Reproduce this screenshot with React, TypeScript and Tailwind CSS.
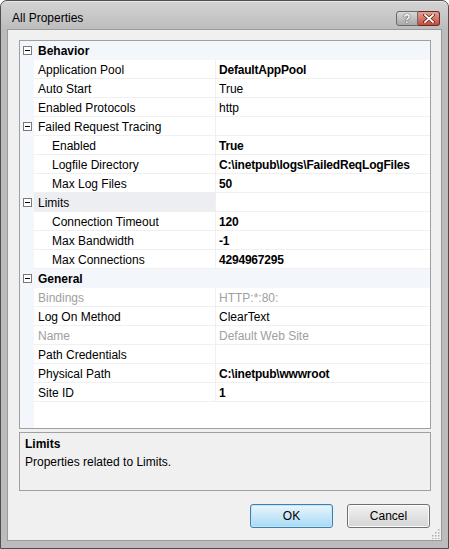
import React from 'react';

type Row =
  | { kind: 'cat'; label: string }
  | { kind: 'group'; label: string; selected?: boolean }
  | { kind: 'prop'; label: string; value: string; level: 1 | 2; bold?: boolean; disabled?: boolean };

const rows: Row[] = [
  { kind: 'cat', label: 'Behavior' },
  { kind: 'prop', label: 'Application Pool', value: 'DefaultAppPool', level: 1, bold: true },
  { kind: 'prop', label: 'Auto Start', value: 'True', level: 1 },
  { kind: 'prop', label: 'Enabled Protocols', value: 'http', level: 1 },
  { kind: 'group', label: 'Failed Request Tracing' },
  { kind: 'prop', label: 'Enabled', value: 'True', level: 2, bold: true },
  { kind: 'prop', label: 'Logfile Directory', value: 'C:\\inetpub\\logs\\FailedReqLogFiles', level: 2, bold: true },
  { kind: 'prop', label: 'Max Log Files', value: '50', level: 2, bold: true },
  { kind: 'group', label: 'Limits', selected: true },
  { kind: 'prop', label: 'Connection Timeout', value: '120', level: 2, bold: true },
  { kind: 'prop', label: 'Max Bandwidth', value: '-1', level: 2, bold: true },
  { kind: 'prop', label: 'Max Connections', value: '4294967295', level: 2, bold: true },
  { kind: 'cat', label: 'General' },
  { kind: 'prop', label: 'Bindings', value: 'HTTP:*:80:', level: 1, disabled: true },
  { kind: 'prop', label: 'Log On Method', value: 'ClearText', level: 1 },
  { kind: 'prop', label: 'Name', value: 'Default Web Site', level: 1, disabled: true },
  { kind: 'prop', label: 'Path Credentials', value: '', level: 1 },
  { kind: 'prop', label: 'Physical Path', value: 'C:\\inetpub\\wwwroot', level: 1, bold: true },
  { kind: 'prop', label: 'Site ID', value: '1', level: 1, bold: true },
];

function MinusBox() {
  return (
    <svg width="9" height="9" viewBox="0 0 9 9" className="block">
      <rect x="0.5" y="0.5" width="8" height="8" fill="#fff" stroke="#7a7a7a" />
      <line x1="2" y1="4.5" x2="7" y2="4.5" stroke="#000" />
    </svg>
  );
}

function GridRow({ row }: { row: Row }) {
  if (row.kind === 'cat') {
    return (
      <div className="flex h-[19px] bg-[#f3f6fa] items-center">
        <div className="w-[14px] flex justify-center shrink-0 pl-[1px]">
          <MinusBox />
        </div>
        <span className="pl-[4px] pt-[1px] font-bold">{row.label}</span>
      </div>
    );
  }
  if (row.kind === 'group') {
    return (
      <div className="flex h-[19px]">
        <div className="w-[14px] flex items-center justify-center shrink-0 bg-[#f3f6fa] pl-[1px]">
          <MinusBox />
        </div>
        <div
          className={`w-[181px] shrink-0 flex items-center pl-[4px] pt-[1px] border-b border-[#f0f0f0] ${
            row.selected ? 'bg-[#eceef2]' : 'bg-white'
          }`}
        >
          {row.label}
        </div>
        <div className="flex-1 border-l border-b border-[#f0f0f0] bg-white" />
      </div>
    );
  }
  const color = row.disabled ? 'text-[#a0a0a0]' : 'text-black';
  return (
    <div className="flex h-[19px]">
      <div className="w-[14px] shrink-0 bg-[#f3f6fa]" />
      <div
        className={`w-[181px] shrink-0 flex items-center pt-[1px] border-b border-[#f0f0f0] bg-white ${color} ${
          row.level === 2 ? 'pl-[18px]' : 'pl-[4px]'
        }`}
      >
        {row.label}
      </div>
      <div
        className={`flex-1 flex items-center pl-[3px] pt-[1px] border-l border-b border-[#f0f0f0] bg-white whitespace-nowrap ${color} ${
          row.bold ? 'font-bold tracking-[-0.2px]' : ''
        }`}
      >
        {row.value}
      </div>
    </div>
  );
}

export default function App() {
  return (
    <div
      className="w-[449px] h-[549px] flex flex-col rounded-t-[7px] border border-[#4f4f4f] bg-[#bcbcbc] text-[12px] text-black overflow-hidden"
      style={{ fontFamily: '"Segoe UI", "Liberation Sans", Arial, sans-serif' }}
    >
      {/* Title bar */}
      <div className="h-[28px] shrink-0 flex items-start bg-gradient-to-b from-[#d3d3d3] to-[#bdbdbd] rounded-t-[6px] border-t border-[#e8e8e8]">
        <span className="ml-[11px] mt-[8px] text-[12px] leading-[16px]">All Properties</span>
        <div className="ml-auto mr-[8px] mt-[9px] flex">
          <div className="w-[22px] h-[15px] rounded-l-[3px] border border-[#6a6a6a] bg-gradient-to-b from-[#d8d8d8] to-[#a8a8a8] flex items-center justify-center">
            <span
              className="text-white font-bold text-[12px] leading-none"
              style={{ textShadow: '0 0 1px #333, 0 0 1px #333' }}
            >
              ?
            </span>
          </div>
          <div className="w-[22px] h-[15px] rounded-r-[3px] border border-l-0 border-[#6e2a22] bg-gradient-to-b from-[#e0a196] to-[#c5493a] flex items-center justify-center">
            <svg width="12" height="9" viewBox="0 0 12 9">
              <path d="M2 1 L10 8 M10 1 L2 8" stroke="#5a2018" strokeWidth="3.2" strokeLinecap="square" />
              <path d="M2 1 L10 8 M10 1 L2 8" stroke="#fff" strokeWidth="1.8" strokeLinecap="square" />
            </svg>
          </div>
        </div>
      </div>

      {/* Client area */}
      <div className="flex-1 mx-[6px] mb-[7px] border border-[#9a9a9a] bg-[#f0f0f0] flex flex-col pt-[10px] pl-[11px] pr-[10px] relative">
        {/* Property grid */}
        <div className="h-[389px] border border-[#a0a0a0] bg-white flex flex-col shrink-0">
          {rows.map((r, i) => (
            <GridRow key={i} row={r} />
          ))}
          <div className="flex flex-1">
            <div className="w-[14px] bg-[#f3f6fa]" />
            <div className="flex-1 bg-white" />
          </div>
        </div>

        {/* Description */}
        <div className="mt-[3px] h-[59px] border border-[#a0a0a0] bg-[#f0f0f0] px-[5px] pt-[2px] leading-[18px] shrink-0">
          <div className="font-bold">Limits</div>
          <div>Properties related to Limits.</div>
        </div>

        {/* Buttons */}
        <div className="mt-[13px] flex justify-end gap-[14px] pr-[1px]">
          <button className="w-[83px] h-[24px] rounded-[3px] border border-[#3c7fb1] bg-gradient-to-b from-[#eaf6fd] to-[#a7d9f5] shadow-[inset_0_0_0_1px_#c4e5f6] text-[12px]">
            OK
          </button>
          <button className="w-[83px] h-[24px] rounded-[3px] border border-[#707070] bg-gradient-to-b from-[#f2f2f2] to-[#d4d4d4] shadow-[inset_0_0_0_1px_#fcfcfc] text-[12px]">
            Cancel
          </button>
        </div>

        {/* Resize grip */}
        <svg width="10" height="10" viewBox="0 0 10 10" className="absolute right-[1px] bottom-[1px]">
          {[
            [8, 0], [8, 3], [5, 3], [8, 6], [5, 6], [2, 6], [8, 9], [5, 9], [2, 9],
          ].map(([x, y], i) => (
            <rect key={i} x={x} y={y - 0} width="1.5" height="1.5" fill="#b0b0b0" />
          ))}
        </svg>
      </div>
    </div>
  );
}
